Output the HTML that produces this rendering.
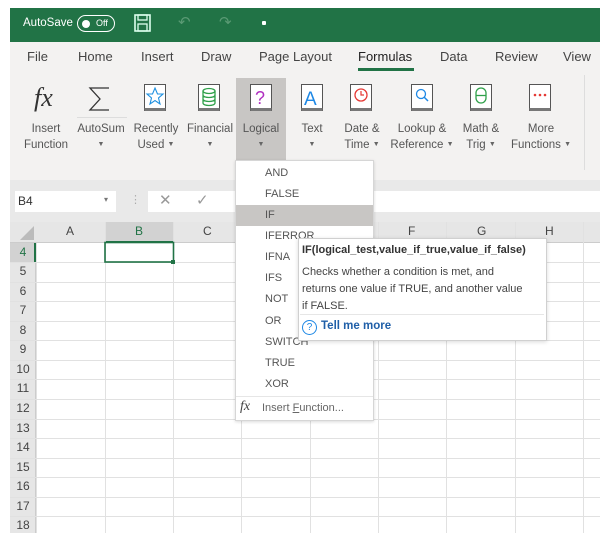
<!DOCTYPE html>
<html><head><meta charset="utf-8"><style>
*{margin:0;padding:0;box-sizing:border-box}
body{width:613px;height:533px;background:#fff;position:relative;overflow:hidden;font-family:"Segoe UI","Liberation Sans","DejaVu Sans",sans-serif;color:#333}
.a{position:absolute;white-space:nowrap}
.tab{position:absolute;top:49px;font-size:13px;color:#444}
.lbl{position:absolute;font-size:11.5px;color:#555;text-align:center;line-height:16px}
.v{font-size:7px;vertical-align:middle;color:#666}
.mi{position:absolute;left:265px;font-size:11px;color:#555}
.rh{position:absolute;left:10px;width:26px;text-align:center;font-size:12px;color:#444}
.ch{position:absolute;top:224px;font-size:12px;color:#444}
</style></head><body>
<div class="a" style="left:10px;top:8px;width:590px;height:34px;background:#217346"></div>
<div class="a" style="left:23px;top:17px;font-size:11.5px;color:#fff">AutoSave</div>
<div class="a" style="left:77px;top:15px;width:38px;height:17px;border:1px solid #fff;border-radius:9px"></div>
<div class="a" style="left:82px;top:20px;width:8px;height:8px;border-radius:50%;background:#fff"></div>
<div class="a" style="left:96px;top:18px;font-size:9px;color:#fff">Off</div>
<svg class="a" style="left:134px;top:14px" width="17" height="18" viewBox="0 0 17 18"><rect x="1" y="1" width="15" height="16" fill="none" stroke="#dfe" stroke-width="1.6"/><rect x="4" y="1" width="9" height="5" fill="none" stroke="#dfe" stroke-width="1.3"/><rect x="4" y="10" width="9" height="7" fill="none" stroke="#dfe" stroke-width="1.3"/></svg>
<div class="a" style="left:178px;top:13px;font-size:15px;color:#5a9a74">↶</div>
<div class="a" style="left:219px;top:13px;font-size:15px;color:#5a9a74">↷</div>
<div class="a" style="left:262px;top:21px;width:4px;height:4px;background:#fff;border-radius:1px"></div>
<div class="a" style="left:10px;top:42px;width:590px;height:138px;background:#f3f2f1"></div>
<div class="tab" style="left:27px">File</div>
<div class="tab" style="left:78px">Home</div>
<div class="tab" style="left:141px">Insert</div>
<div class="tab" style="left:201px">Draw</div>
<div class="tab" style="left:259px">Page Layout</div>
<div class="tab" style="left:358px;color:#222">Formulas</div>
<div class="a" style="left:358px;top:68px;width:56px;height:3px;background:#217346"></div>
<div class="tab" style="left:440px">Data</div>
<div class="tab" style="left:495px">Review</div>
<div class="tab" style="left:563px">View</div>
<div class="a" style="left:584px;top:75px;width:1px;height:95px;background:#ddd"></div>
<div class="a" style="left:236px;top:78px;width:50px;height:83px;background:#c8c6c4"></div>
<div class="a" style="left:34px;top:83px;font-family:'Liberation Serif',serif;font-style:italic;font-size:26px;color:#333">fx</div>
<svg class="a" style="left:88px;top:86px" width="24" height="26"><path d="M21 2H2l10 11L2 24h19" fill="none" stroke="#333" stroke-width="1.3"/></svg>
<div class="a" style="left:77px;top:117px;width:50px;height:1px;background:#ddd"></div>
<svg class="a" style="left:0;top:0" width="613" height="130">
<defs><g id="bk"><rect x="0.5" y="0.5" width="21" height="26" fill="#fff" stroke="#555"/><rect x="0.5" y="24" width="21" height="3" fill="#777"/></g></defs>
<use href="#bk" x="144" y="84"/><use href="#bk" x="198" y="84"/><use href="#bk" x="250" y="84"/><use href="#bk" x="301" y="84"/><use href="#bk" x="350" y="84"/><use href="#bk" x="411" y="84"/><use href="#bk" x="470" y="84"/><use href="#bk" x="529" y="84"/>
<polygon points="155,88 157.5,94 163,94 158.5,98 160,104 155,100.5 150,104 151.5,98 147,94 152.5,94" fill="none" stroke="#1e90e0" stroke-width="1.1"/>
<g fill="none" stroke="#2fa04a" stroke-width="1.3"><ellipse cx="209" cy="91" rx="6" ry="2.5"/><path d="M203 91v12M215 91v12M203 95c0 3.3 12 3.3 12 0M203 99c0 3.3 12 3.3 12 0M203 103c0 3.3 12 3.3 12 0"/></g>
<text x="255" y="104" font-family="Liberation Sans" font-size="18" fill="#b030c0">?</text>
<text x="304" y="105" font-family="Liberation Sans" font-size="19" fill="#1e88e5">A</text>
<circle cx="361" cy="95" r="6" fill="none" stroke="#e53935" stroke-width="1.3"/><path d="M361 91v4h3" fill="none" stroke="#e53935" stroke-width="1.2"/>
<circle cx="421" cy="94" r="4.5" fill="none" stroke="#1e88e5" stroke-width="1.3"/><path d="M424 97l4 4" stroke="#1e88e5" stroke-width="1.5"/>
<rect x="476" y="88" width="10" height="15" rx="5" fill="none" stroke="#2fa04a" stroke-width="1.3"/><path d="M476 95.5h10" stroke="#2fa04a" stroke-width="1.3"/>
<g fill="#e53935"><circle cx="535" cy="95" r="1.3"/><circle cx="540" cy="95" r="1.3"/><circle cx="545" cy="95" r="1.3"/></g>
</svg>
<div class="lbl" style="left:18px;top:121px;width:56px">Insert<br>Function</div>
<div class="lbl" style="left:73px;top:121px;width:56px">AutoSum<br><span class="v">▼</span></div>
<div class="lbl" style="left:128px;top:121px;width:56px">Recently<br>Used <span class="v">▼</span></div>
<div class="lbl" style="left:182px;top:121px;width:56px">Financial<br><span class="v">▼</span></div>
<div class="lbl" style="left:236px;top:121px;width:50px">Logical<br><span class="v">▼</span></div>
<div class="lbl" style="left:287px;top:121px;width:50px">Text<br><span class="v">▼</span></div>
<div class="lbl" style="left:335px;top:121px;width:54px">Date &amp;<br>Time <span class="v">▼</span></div>
<div class="lbl" style="left:387px;top:121px;width:70px">Lookup &amp;<br>Reference <span class="v">▼</span></div>
<div class="lbl" style="left:452px;top:121px;width:58px">Math &amp;<br>Trig <span class="v">▼</span></div>
<div class="lbl" style="left:505px;top:121px;width:72px">More<br>Functions <span class="v">▼</span></div>
<div class="a" style="left:10px;top:180px;width:590px;height:42px;background:#e9e9e9"></div>
<div class="a" style="left:15px;top:191px;width:101px;height:21px;background:#fff"></div>
<div class="a" style="left:18px;top:194px;font-size:12px;color:#333">B4</div>
<div class="a" style="left:104px;top:195px;font-size:8px;color:#777">▾</div>
<div class="a" style="left:130px;top:193px;font-size:11px;color:#aaa">⋮</div>
<div class="a" style="left:148px;top:191px;width:452px;height:21px;background:#fff"></div>
<div class="a" style="left:159px;top:191px;font-size:15px;color:#999">✕</div>
<div class="a" style="left:196px;top:191px;font-size:15px;color:#999">✓</div>
<div class="a" style="left:10px;top:222px;width:590px;height:21px;background:#e6e6e6;border-bottom:1px solid #ccc"></div>
<div class="a" style="left:105px;top:222px;width:69px;height:21px;background:#d2d2d2;border-bottom:2px solid #217346"></div>
<div class="a" style="left:10px;top:243px;width:26px;height:290px;background:#e6e6e6;border-right:1px solid #ccc"></div>
<div class="a" style="left:10px;top:243px;width:26px;height:19px;background:#d2d2d2;border-right:2px solid #217346"></div>
<svg class="a" style="left:0;top:0" width="613" height="533">
<polygon points="34,226 34,240 20,240" fill="#bbb"/>
<g stroke="#e1e1e1" stroke-width="1">
<path d="M36.5 243V533M105.5 222V533M173.5 222V533M241.5 222V533M310.5 222V533M378.5 222V533M446.5 222V533M515.5 222V533M583.5 222V533"/>
<path d="M10 262.5H600M10 282.5H600M10 301.5H600M10 321.5H600M10 340.5H600M10 360.5H600M10 379.5H600M10 399.5H600M10 419.5H600M10 438.5H600M10 458.5H600M10 477.5H600M10 497.5H600M10 516.5H600"/>
</g>
<rect x="105" y="242.5" width="68.5" height="19.5" fill="none" stroke="#217346" stroke-width="1.6"/>
<rect x="171" y="260" width="4" height="4" fill="#217346"/>
</svg>
<div class="ch" style="left:66px">A</div>
<div class="ch" style="left:135px;color:#217346">B</div>
<div class="ch" style="left:203px">C</div>
<div class="ch" style="left:408px">F</div>
<div class="ch" style="left:477px">G</div>
<div class="ch" style="left:545px">H</div>
<div class="rh" style="top:245px;color:#217346">4</div>
<div class="rh" style="top:264px">5</div>
<div class="rh" style="top:284px">6</div>
<div class="rh" style="top:303px">7</div>
<div class="rh" style="top:323px">8</div>
<div class="rh" style="top:342px">9</div>
<div class="rh" style="top:362px">10</div>
<div class="rh" style="top:381px">11</div>
<div class="rh" style="top:401px">12</div>
<div class="rh" style="top:421px">13</div>
<div class="rh" style="top:440px">14</div>
<div class="rh" style="top:460px">15</div>
<div class="rh" style="top:479px">16</div>
<div class="rh" style="top:499px">17</div>
<div class="rh" style="top:518px">18</div>
<div class="a" style="left:235px;top:160px;width:139px;height:261px;background:#fff;border:1px solid #d6d6d6;box-shadow:0 1px 3px rgba(0,0,0,.15)"></div>
<div class="a" style="left:236px;top:205px;width:137px;height:21px;background:#c8c6c4"></div>
<div class="mi" style="top:167px">AND</div>
<div class="mi" style="top:188px">FALSE</div>
<div class="mi" style="top:209px">IF</div>
<div class="mi" style="top:230px">IFERROR</div>
<div class="mi" style="top:251px">IFNA</div>
<div class="mi" style="top:272px">IFS</div>
<div class="mi" style="top:293px">NOT</div>
<div class="mi" style="top:315px">OR</div>
<div class="mi" style="top:336px">SWITCH</div>
<div class="mi" style="top:357px">TRUE</div>
<div class="mi" style="top:378px">XOR</div>
<div class="a" style="left:236px;top:396px;width:137px;height:1px;background:#e6e6e6"></div>
<div class="a" style="left:240px;top:399px;font-family:'Liberation Serif',serif;font-style:italic;font-size:14px;color:#444">fx</div>
<div class="a" style="left:262px;top:402px;font-size:11px;color:#666">Insert <u>F</u>unction...</div>
<div class="a" style="left:298px;top:238px;width:249px;height:103px;background:#fff;border:1px solid #d0d0d0;box-shadow:0 1px 4px rgba(0,0,0,.15)"></div>
<div class="a" style="left:302px;top:244px;font-size:11px;font-weight:bold;color:#333">IF(logical_test,value_if_true,value_if_false)</div>
<div class="a" style="left:302px;top:264px;font-size:11px;line-height:17px;color:#444">Checks whether a condition is met, and<br>returns one value if TRUE, and another value<br>if FALSE.</div>
<div class="a" style="left:300px;top:314px;width:244px;height:1px;background:#e6e6e6"></div>
<div class="a" style="left:302px;top:320px;width:15px;height:15px;border:1.3px solid #1e88e5;border-radius:50%;font-size:10px;color:#1e88e5;text-align:center;line-height:13px">?</div>
<div class="a" style="left:321px;top:320px;font-size:11.5px;font-weight:bold;color:#1f5fa8">Tell me more</div>
</body></html>
